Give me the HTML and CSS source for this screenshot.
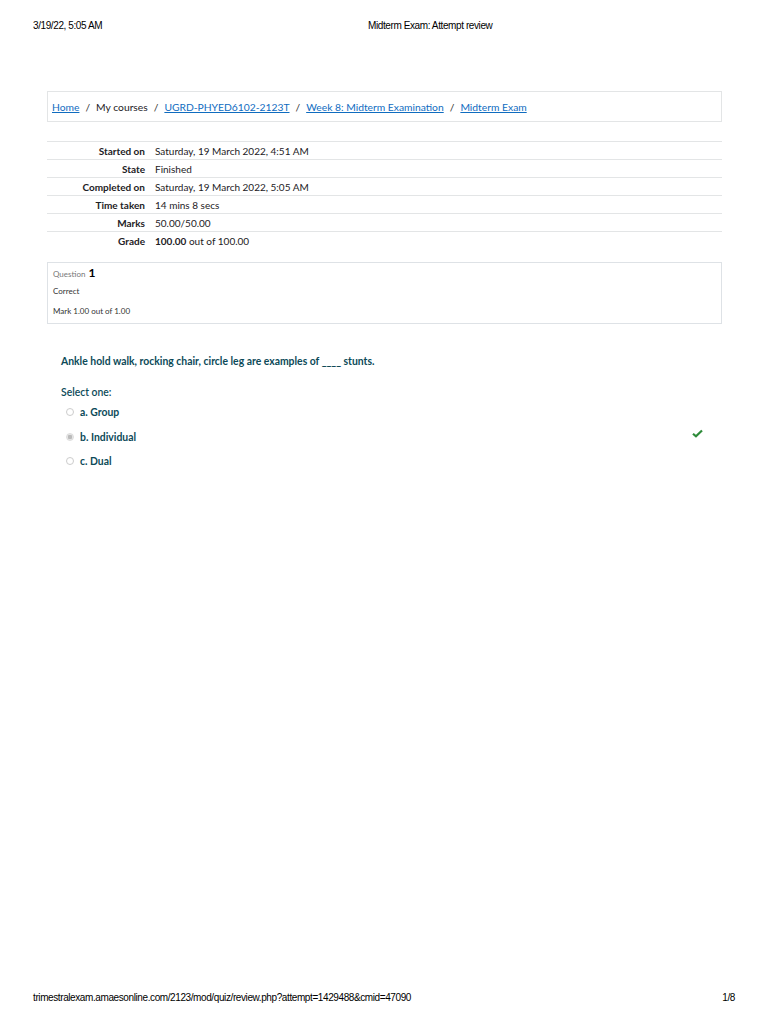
FILE: index.html
```html
<!DOCTYPE html>
<html>
<head>
<meta charset="utf-8">
<title>Midterm Exam: Attempt review</title>
<link rel="stylesheet" href="styles.css">
</head>
<body>
<div class="sheet">
  <header class="print-head">
    <span class="ph-date">3/19/22, 5:05 AM</span>
    <span class="ph-title">Midterm Exam: Attempt review</span>
  </header>

  <main class="page">
    <nav class="crumbs">
      <a href="#">Home</a><span class="sep">/</span>
      <span class="plain">My courses</span><span class="sep">/</span>
      <a href="#">UGRD-PHYED6102-2123T</a><span class="sep">/</span>
      <a href="#">Week 8: Midterm Examination</a><span class="sep">/</span>
      <a href="#">Midterm Exam</a>
    </nav>

    <table class="summary">
      <tr><th>Started on</th><td>Saturday, 19 March 2022, 4:51 AM</td></tr>
      <tr><th>State</th><td>Finished</td></tr>
      <tr><th>Completed on</th><td>Saturday, 19 March 2022, 5:05 AM</td></tr>
      <tr><th>Time taken</th><td>14 mins 8 secs</td></tr>
      <tr><th>Marks</th><td>50.00/50.00</td></tr>
      <tr class="last"><th>Grade</th><td><b>100.00</b> out of 100.00</td></tr>
    </table>

    <section class="qinfo">
      <div class="qno">Question <span class="num">1</span></div>
      <div class="qstate">Correct</div>
      <div class="qmark">Mark 1.00 out of 1.00</div>
    </section>

    <section class="formulation">
      <p class="qtext">Ankle hold walk, rocking chair, circle leg are examples of ____ stunts.</p>
      <p class="prompt">Select one:</p>
      <div class="answers">
        <div class="opt"><span class="radio"></span><span>a. Group</span></div>
        <div class="opt"><span class="radio checked"></span><span>b. Individual</span>
          <svg class="tick" viewBox="0 0 12 10" width="11" height="9"><path d="M1 5.2 L4.3 8.2 L11 1.6" fill="none" stroke="#2e8b3a" stroke-width="2.4"/></svg>
        </div>
        <div class="opt"><span class="radio"></span><span>c. Dual</span></div>
      </div>
    </section>
  </main>

  <footer class="print-foot">
    <span>trimestralexam.amaesonline.com/2123/mod/quiz/review.php?attempt=1429488&amp;cmid=47090</span>
    <span>1/8</span>
  </footer>
</div>
</body>
</html>
```

FILE: styles.css
```css
html, body {
  margin: 0;
  padding: 0;
  background: #fff;
}

.sheet {
  width: 768px;
  height: 1024px;
  display: flex;
  flex-direction: column;
  font-family: "Lato", "Open Sans", sans-serif;
  color: #1d2125;
}

.print-head {
  display: flex;
  padding: 20px 33px 0 33px;
  font-family: "Liberation Sans", Arial, sans-serif;
  font-size: 10px;
  letter-spacing: -0.4px;
  color: #000;
  height: 14px;
}

.ph-date { width: 335px; }

.page {
  flex: 1;
  padding: 0 46px 0 47px;
  margin-top: 57px;
}

.crumbs {
  border: 1px solid #e3e5e6;
  height: 29px;
  display: flex;
  align-items: center;
  padding: 0 0 0 4px;
  font-size: 10.3px;
  color: #1d2125;
}

.crumbs a {
  color: #0f6cbf;
  text-decoration: underline;
}

.crumbs .sep {
  margin: 0 6px;
  color: #333;
}

.summary {
  width: 100%;
  margin-top: 19px;
  border-collapse: collapse;
  font-size: 10px;
}

.summary tr {
  border-top: 1px solid #e3e5e6;
}

.summary th {
  width: 98px;
  text-align: right;
  font-weight: bold;
  padding: 0 10px 0 0;
  height: 17px;
}

.summary td {
  padding: 0;
  height: 17px;
  color: #1d2125;
}

.qinfo {
  margin-top: 13px;
  border: 1px solid #dee2e6;
  height: 60px;
  padding: 0 5px;
  font-size: 8px;
  color: #333;
}

.qno {
  color: #777;
  margin-top: 3px;
  height: 14px;
  line-height: 14px;
}

.qno .num {
  color: #000;
  font-size: 12px;
  font-weight: bold;
  margin-left: 1px;
}

.qstate {
  margin-top: 4px;
  height: 14px;
  line-height: 14px;
}

.qmark {
  margin-top: 6px;
  height: 14px;
  line-height: 14px;
}

.formulation {
  padding: 0 14px;
  margin-top: 29px;
  color: #0c4a58;
  font-weight: bold;
  font-size: 10.4px;
}

.qtext {
  margin: 0;
  height: 16px;
  line-height: 16px;
  font-size: 10.4px;
}

.prompt {
  margin: 15px 0 0 0;
  height: 16px;
  line-height: 16px;
  font-weight: 600;
}

.answers {
  margin-top: 0;
  padding-left: 5px;
}

.opt {
  display: flex;
  align-items: center;
  height: 24.5px;
  position: relative;
}

.radio {
  width: 8px;
  height: 8px;
  border-radius: 50%;
  border: 1px solid #ccc;
  margin-right: 6px;
  box-sizing: border-box;
}

.radio.checked {
  background: radial-gradient(circle, #bbb 0 2px, #e6e6e6 2.5px);
  border-color: #ddd;
}

.tick {
  position: absolute;
  left: 626px;
  top: 4px;
}

.print-foot {
  display: flex;
  justify-content: space-between;
  padding: 0 33px 21px 33px;
  font-family: "Liberation Sans", Arial, sans-serif;
  font-size: 10px;
  letter-spacing: -0.4px;
  color: #000;
}
```
